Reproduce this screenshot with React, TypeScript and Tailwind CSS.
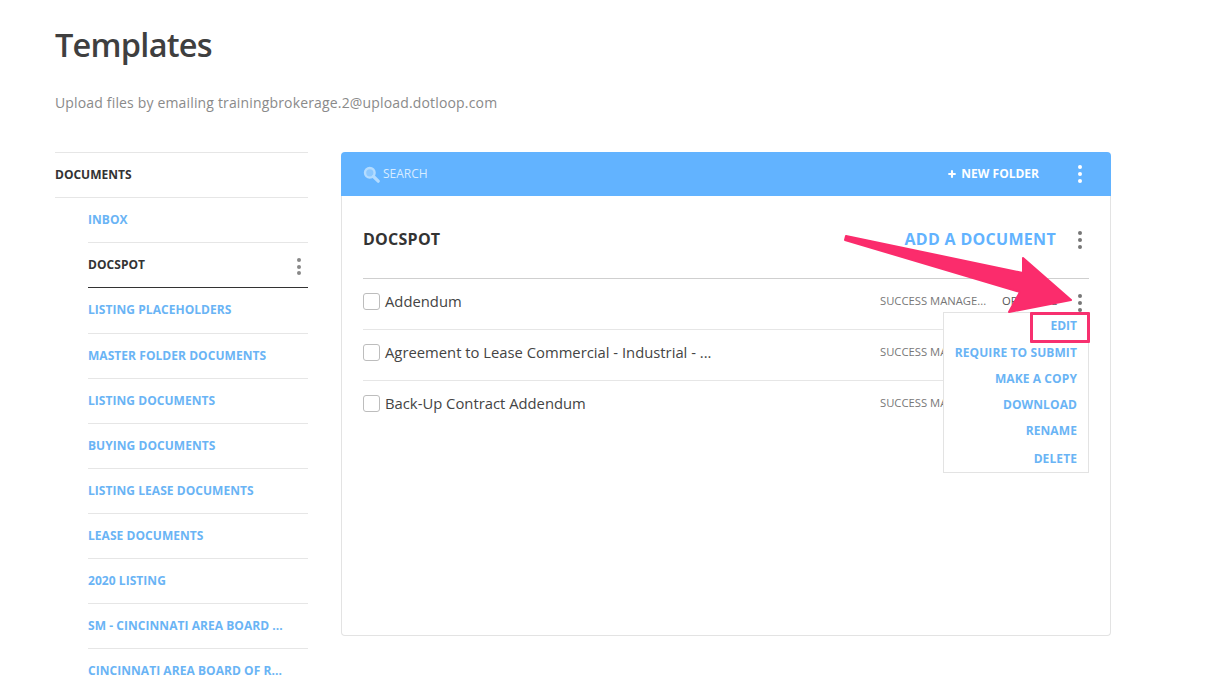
import { Plus } from "lucide-react"

const folders = [
  "INBOX",
  "DOCSPOT",
  "LISTING PLACEHOLDERS",
  "MASTER FOLDER DOCUMENTS",
  "LISTING DOCUMENTS",
  "BUYING DOCUMENTS",
  "LISTING LEASE DOCUMENTS",
  "LEASE DOCUMENTS",
  "2020 LISTING",
  "SM - CINCINNATI AREA BOARD ...",
  "CINCINNATI AREA BOARD OF R...",
]

const docs = [
  { name: "Addendum", owner: "SUCCESS MANAGE...", status: "OPTIONAL" },
  { name: "Agreement to Lease Commercial - Industrial - ...", owner: "SUCCESS MANAGE...", status: "OPTIONAL" },
  { name: "Back-Up Contract Addendum", owner: "SUCCESS MANAGE...", status: "OPTIONAL" },
]

const menu = ["REQUIRE TO SUBMIT", "MAKE A COPY", "DOWNLOAD", "RENAME", "DELETE"]

function Dots({ className }: { className: string }) {
  return (
    <span className={`flex flex-col items-center gap-[2.75px] ${className}`}>
      <span className="size-[4px] rounded-full bg-current" />
      <span className="size-[4px] rounded-full bg-current" />
      <span className="size-[4px] rounded-full bg-current" />
    </span>
  )
}

export default function App() {
  return (
    <div className="relative h-[677px] w-[1206px] overflow-hidden bg-white font-['Open_Sans',sans-serif] text-[#333]">
      <div className="pl-[55px] pt-[24px]">
        <h1 className="text-[32.5px] font-semibold leading-[42px] tracking-[-0.75px] text-[#3f3f3f]">Templates</h1>
        <p className="mt-[27px] text-[14px] leading-[20px] tracking-[0.16px] text-[#8a8a8a]">
          Upload files by emailing trainingbrokerage.2@upload.dotloop.com
        </p>
      </div>

      <div className="mt-[39px] flex items-start pl-[55px]">
        <nav className="w-[253px] shrink-0 border-t border-[#e6e6e6]">
          <div className="flex h-[45px] items-center border-b border-[#e6e6e6] text-[12px] font-bold text-[#333]">
            DOCUMENTS
          </div>
          <ul className="pl-[33px]">
            {folders.map((f) => (
              <li
                key={f}
                className={`flex items-center justify-between border-b text-[12px] font-bold tracking-[0.05px] ${
                  f === "DOCSPOT" ? "border-[#333] text-[#333]" : "border-[#e6e6e6] text-[#6ab4f5]"
                } ${f === "LISTING PLACEHOLDERS" ? "h-[46px] pb-px" : "h-[45px]"}`}
              >
                {f}
                {f === "DOCSPOT" && <Dots className="mr-[7px] mt-[3px] text-[#888]" />}
              </li>
            ))}
          </ul>
        </nav>

        <section className="ml-[33px] w-[770px] shrink-0">
          <div className="flex h-[44px] items-center justify-between rounded-t-[4px] bg-[#62b3ff] pl-[22px] pr-[29px] text-white">
            <div className="flex items-center gap-[3px] text-[12px] text-[#d8ecff]">
              <svg width="17" height="17" viewBox="0 0 17 17" aria-hidden="true">
                <circle cx="6.8" cy="6.8" r="4.8" fill="#8cc8ff" stroke="#b4dcff" strokeWidth="2.4" />
                <path d="M10.5 10.5 L15.2 15.2" stroke="#b4dcff" strokeWidth="3.2" strokeLinecap="round" />
              </svg>
              SEARCH
            </div>
            <div className="flex items-center">
              <span className="flex items-center gap-[4px] text-[12px] font-bold">
                <Plus className="size-[10px]" strokeWidth={5} />
                NEW FOLDER
              </span>
              <Dots className="ml-[39px] text-white" />
            </div>
          </div>

          <div className="h-[440px] rounded-b-[4px] border border-t-0 border-[#e3e3e3] px-[21px]">
            <div className="flex h-[83px] items-center justify-between border-b border-[#cfcfcf] pt-[4px]">
              <h2 className="text-[16px] font-bold tracking-[0.25px] text-[#333]">DOCSPOT</h2>
              <div className="flex items-center">
                <span className="text-[16px] font-bold tracking-[0.3px] text-[#62b3ff]">ADD A DOCUMENT</span>
                <Dots className="ml-[22px] mr-[7px] mt-[2px] text-[#777]" />
              </div>
            </div>
            <ul>
              {docs.map((d, i) => (
                <li
                  key={d.name}
                  className={`flex h-[51px] items-center pb-[6px] ${i < 2 ? "border-b border-[#e6e6e6]" : ""}`}
                >
                  <span className="size-[17px] shrink-0 rounded-[3px] border border-[#bdbdbd]" />
                  <span className="mb-[1px] ml-[5px] w-[495px] shrink-0 text-[14.8px] font-medium leading-[20px] text-[#444]">
                    {d.name}
                  </span>
                  <span className="w-[122px] shrink-0 text-[11.25px] text-[#777]">{d.owner}</span>
                  <span className="text-[11.25px] text-[#555]">{d.status}</span>
                  {i === 0 && <Dots className="ml-auto mr-[7px] mt-[4px] text-[#777]" />}
                </li>
              ))}
            </ul>
          </div>
        </section>
      </div>

      {/* open row menu */}
      <div className="absolute left-[943px] top-[312px] flex h-[161px] w-[146px] flex-col items-end border border-[#e3e3e3] bg-white pr-[11px] pt-[27px] text-[12px] font-bold leading-[26px] tracking-[0.1px] text-[#6ab4f5]">
        {menu.map((m) => (
          <span key={m} className={m === "DELETE" ? "mt-[2px]" : ""}>
            {m}
          </span>
        ))}
      </div>

      {/* callout annotation */}
      <div className="absolute left-[1030px] top-[312px] flex h-[31px] w-[60px] items-center justify-end rounded-[1px] border-[3px] border-[#f7306f] pb-[3px] pr-[10px] text-[12px] font-bold text-[#6ab4f5]">
        EDIT
      </div>
      <svg className="absolute left-0 top-0" width="1206" height="677" viewBox="0 0 1206 677">
        <path
          d="M846 236 L1023 273 L1023 258 L1071 300 L1009 312 L1020 292 L845 240 Z"
          fill="#fb2c6c"
          stroke="#fb2c6c"
          strokeWidth="2"
          strokeLinejoin="round"
        />
      </svg>
    </div>
  )
}
